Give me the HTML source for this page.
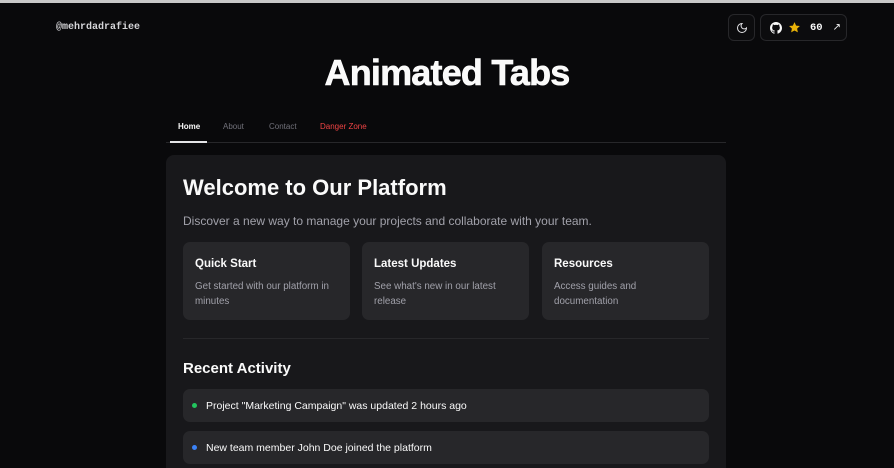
<!DOCTYPE html>
<html><head><meta charset="utf-8"><style>
*{box-sizing:border-box;margin:0;padding:0}
html,body{width:894px;height:468px;overflow:hidden}
body{background:#09090b;font-family:"Liberation Sans",sans-serif;color:#fafafa;position:relative}
.top{position:absolute;left:0;top:0;width:894px;height:3px;background:#c8c8c8}
.handle{position:absolute;left:56px;top:22px;font-family:"Liberation Mono",monospace;font-size:10px;font-weight:bold;color:#d4d4d8}
.btn{position:absolute;top:14px;height:27px;border:1px solid #27272a;border-radius:6px;background:#0c0c0e;display:flex;align-items:center}
h1{position:absolute;left:0;width:894px;top:52px;text-align:center;font-size:36px;font-weight:900;letter-spacing:-0.8px;-webkit-text-stroke:0.6px #fff}
.tabs{position:absolute;left:166px;top:120px;width:560px;height:23px;border-bottom:1px solid #27272a;font-size:8px;color:#71717a}
.tabs span{position:absolute;top:2px}
.ul{position:absolute;left:170px;top:141px;width:37px;height:2px;background:#e4e4e7}
.card{position:absolute;left:166px;top:155px;width:560px;height:330px;background:#18181b;border-radius:8px}
.card h2{position:absolute;left:17px;top:20px;font-size:22px;font-weight:bold}
.sub{position:absolute;left:17px;top:59px;font-size:12px;color:#a1a1aa}
.f{position:absolute;top:87px;width:167px;height:78px;background:#27272a;border-radius:7px;padding:16px 12px}
.f b{display:block;font-size:11.5px;margin-bottom:9px}
.f p{font-size:9.8px;color:#a1a1aa;line-height:15px}
.hr{position:absolute;left:17px;top:183px;width:526px;height:1px;background:#27272a}
.ra{position:absolute;left:17px;top:205px;font-size:15px;font-weight:bold}
.act{position:absolute;left:17px;width:526px;height:33px;background:#27272a;border-radius:7px;font-size:10.5px;display:flex;align-items:center;padding-left:23px}
.act i{position:absolute;left:9px;top:14px;width:5px;height:5px;border-radius:50%}
</style></head><body>
<div class="top"></div>
<div class="handle">@mehrdadrafiee</div>
<div class="btn" style="left:728px;width:27px;justify-content:center"><svg width="12" height="12" viewBox="0 0 24 24" fill="none" stroke="#e4e4e7" stroke-width="2"><path d="M12 3a6 6 0 0 0 9 9 9 9 0 1 1-9-9z"/></svg></div>
<div class="btn" style="left:760px;width:87px;padding-left:9px;gap:6px"><svg width="12" height="12" viewBox="0 0 16 16" fill="#fafafa"><path d="M8 0C3.6 0 0 3.600 0 8c0 3.5 2.3 6.5 5.5 7.6.4.1.5-.2.5-.4v-1.4c-2.200.5-2.700-1-2.700-1-.4-.9-.9-1.200-.9-1.200-.7-.5.1-.5.1-.5.8.1 1.200.8 1.200.8.7 1.200 1.900.9 2.300.7.1-.5.3-.9.5-1.100-1.800-.2-3.600-.9-3.600-4 0-.9.3-1.600.8-2.100-.1-.2-.4-1 .1-2.100 0 0 .7-.2 2.200.8.6-.2 1.300-.3 2-.3s1.400.1 2 .3c1.500-1 2.200-.8 2.200-.8.4 1.100.2 1.900.1 2.100.5.6.8 1.300.8 2.100 0 3.100-1.900 3.700-3.600 3.900.3.3.5.8.5 1.500v2.200c0 .2.1.5.6.4C13.700 14.500 16 11.500 16 8c0-4.400-3.600-8-8-8z"/></svg><svg width="13" height="13" viewBox="0 0 24 24" fill="#eab308"><path d="M12 2l3 6.5 7 .8-5.200 4.800 1.400 7-6.200-3.600-6.200 3.600 1.400-7L2 9.300l7-.8z"/></svg><span style="font-family:'Liberation Mono',monospace;font-size:10.5px;font-weight:bold;margin-left:3px">60</span><span style="font-size:10px;margin-left:4px">↗</span></div>
<h1>Animated Tabs</h1>
<div class="tabs"><span style="left:12px;color:#fafafa;font-weight:bold">Home</span><span style="left:57px">About</span><span style="left:103px">Contact</span><span style="left:154px;color:#ef4444">Danger Zone</span></div>
<div class="ul"></div>
<div class="card">
<h2>Welcome to Our Platform</h2>
<div class="sub">Discover a new way to manage your projects and collaborate with your team.</div>
<div class="f" style="left:17px"><b>Quick Start</b><p>Get started with our platform in minutes</p></div>
<div class="f" style="left:196px"><b>Latest Updates</b><p>See what's new in our latest release</p></div>
<div class="f" style="left:376px"><b>Resources</b><p>Access guides and documentation</p></div>
<div class="hr"></div>
<div class="ra">Recent Activity</div>
<div class="act" style="top:234px"><i style="background:#22c55e"></i>Project "Marketing Campaign" was updated 2 hours ago</div>
<div class="act" style="top:276px"><i style="background:#3b82f6"></i>New team member John Doe joined the platform</div>
</div>
</body></html>
